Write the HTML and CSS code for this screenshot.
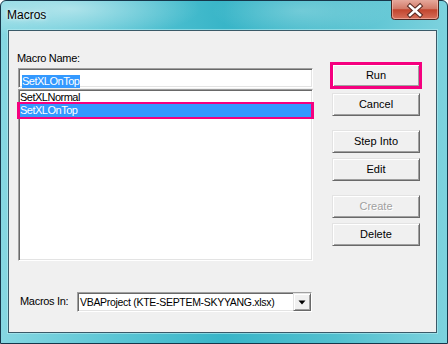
FILE: index.html
```html
<!DOCTYPE html>
<html>
<head>
<meta charset="utf-8">
<link rel="stylesheet" href="styles.css">
</head>
<body>
<div class="window">
  <div class="titlebar">
    <span class="title">Macros</span>
    <div class="close">
      <svg width="48" height="20" viewBox="0 0 48 20">
        <defs>
          <linearGradient id="cg" x1="0" y1="0" x2="0" y2="1">
            <stop offset="0" stop-color="#e6a99c"/>
            <stop offset="0.45" stop-color="#d27a68"/>
            <stop offset="0.5" stop-color="#c2452e"/>
            <stop offset="1" stop-color="#d7715c"/>
          </linearGradient>
        </defs>
        <path d="M0.5 0 V16.5 Q0.5 19.5 3.5 19.5 H44.5 Q47.5 19.5 47.5 16.5 V0" fill="url(#cg)" stroke="#4a2620" stroke-width="1"/>
        <path d="M1.5 1 V16 Q1.5 18.5 4 18.5 H44 Q46.5 18.5 46.5 16 V1" fill="none" stroke="rgba(255,210,200,0.5)" stroke-width="1"/>
        <path d="M19 6 L29 15 M29 6 L19 15" stroke="#5a2a22" stroke-width="4.6" stroke-linecap="square"/>
        <path d="M19 6 L29 15 M29 6 L19 15" stroke="#ffffff" stroke-width="2.6" stroke-linecap="square"/>
      </svg>
    </div>
  </div>
  <div class="client">
    <div class="main">
      <div class="left">
        <div class="label">Macro Name:</div>
        <div class="textbox"><span class="sel">SetXLOnTop</span></div>
        <div class="listbox">
          <div class="item">SetXLNormal</div>
          <div class="item selected">SetXLOnTop</div>
        </div>
      </div>
      <div class="buttons">
        <div class="btn run">Run</div>
        <div class="btn cancel">Cancel</div>
        <div class="btn step">Step Into</div>
        <div class="btn edit">Edit</div>
        <div class="btn create">Create</div>
        <div class="btn delete">Delete</div>
      </div>
    </div>
    <div class="macros-in">
      <div class="label in-label">Macros In:</div>
      <div class="combo">
        <span class="combo-text">VBAProject (KTE-SEPTEM-SKYYANG.xlsx)</span>
        <div class="drop">
          <svg width="8" height="5" viewBox="0 0 8 5"><polygon points="0.5,0.5 7.5,0.5 4,4.5" fill="#000"/></svg>
        </div>
      </div>
    </div>
  </div>
</div>
</body>
</html>
```

FILE: styles.css
```css
* { box-sizing: border-box; }
html, body { margin: 0; padding: 0; background: #ffffff; }
body {
  width: 448px;
  height: 344px;
  overflow: hidden;
  font-family: "Liberation Sans", Arial, sans-serif;
  color: #000;
}
.window {
  width: 448px;
  height: 344px;
  border: 1px solid #16364a;
  border-radius: 6px 6px 0 0;
  display: flex;
  flex-direction: column;
  background:
    radial-gradient(130px 30px at 70px 8px, rgba(255,255,255,0.45), rgba(255,255,255,0)),
    radial-gradient(90px 26px at 300px 10px, rgba(255,255,255,0.22), rgba(255,255,255,0)),
    linear-gradient(90deg, #86d7e2 0%, #5cc6d5 25%, #38b5c8 50%, #52c0cf 75%, #7dd2de 100%);
}
.titlebar {
  height: 29px;
  display: flex;
  justify-content: space-between;
  align-items: flex-start;
}
.title {
  font-size: 12px;
  line-height: 29px;
  padding-left: 6px;
  text-shadow: 0 0 6px rgba(255,255,255,0.9), 0 0 3px rgba(255,255,255,0.7);
}
.close {
  width: 48px;
  height: 20px;
  margin-top: -1px;
  margin-right: 8px;
}
.close svg { display: block; }
.client {
  flex: 1;
  margin: 0 10px 10px 7px;
  border: 1px solid #3a5968;
  background: #f0f0f0;
  padding: 21px 0 0 9px;
  box-shadow: 0 0 0 1px rgba(180,235,240,0.6);
}
.main {
  display: grid;
  grid-template-columns: 295px 88px;
  column-gap: 19px;
}
.left {
  display: flex;
  flex-direction: column;
}
.label {
  font-size: 11px;
  line-height: 13px;
  letter-spacing: -0.3px;
  margin-left: -1px;
  white-space: nowrap;
}
.textbox {
  margin-top: 3px;
  height: 20px;
  background: #fff;
  border: 1px solid;
  border-color: #a0a0a0 #ffffff #ffffff #a0a0a0;
  box-shadow: inset 1px 1px #696969, inset -1px -1px #e3e3e3;
  padding: 2px 0 0 3px;
}
.sel {
  display: inline-block;
  background: #3399ff;
  color: #fff;
  font-size: 11px;
  line-height: 13px;
  letter-spacing: -0.5px;
  padding-right: 1px;
}
.listbox {
  margin-top: 1px;
  height: 172px;
  background: #fff;
  border: 1px solid;
  border-color: #a0a0a0 #ffffff #ffffff #a0a0a0;
  box-shadow: inset 1px 1px #696969, inset -1px -1px #e3e3e3;
  padding: 1px;
}
.item {
  font-size: 11px;
  line-height: 13px;
  letter-spacing: -0.5px;
  white-space: nowrap;
}
.item.selected {
  background: #3399ff;
  color: #fff;
  box-shadow: 0 0 0 2px #f5007f, -1px 0 0 2px #f5007f, 1px 0 0 2px #f5007f;
}
.buttons {
  display: flex;
  flex-direction: column;
  padding-top: 12px;
}
.btn {
  height: 23px;
  font-size: 11px;
  line-height: 21px;
  text-align: center;
  background: #f0f0f0;
  border: 1px solid;
  border-color: #e3e3e3 #696969 #696969 #e3e3e3;
  box-shadow: inset 1px 1px #ffffff, inset -1px -1px #a0a0a0;
}
.run { outline: 3px solid #f5007f; outline-offset: -1px; }
.cancel { margin-top: 6px; }
.step { margin-top: 14px; }
.edit { margin-top: 5px; }
.create { margin-top: 14px; color: #a0a0a0; text-shadow: 1px 1px #ffffff; }
.delete { margin-top: 5px; }
.macros-in {
  display: flex;
  align-items: center;
  margin-top: 31px;
  padding-left: 2px;
}
.in-label {
  width: 57px;
  margin-left: 0;
  margin-top: -2px;
}
.combo {
  width: 235px;
  height: 20px;
  background: #fff;
  border: 1px solid;
  border-color: #a0a0a0 #ffffff #ffffff #a0a0a0;
  box-shadow: inset 1px 1px #696969, inset -1px -1px #e3e3e3;
  display: flex;
  align-items: stretch;
  justify-content: space-between;
  padding-left: 2px;
}
.combo-text {
  font-size: 10.5px;
  line-height: 18px;
  letter-spacing: -0.3px;
  white-space: nowrap;
}
.drop {
  width: 18px;
  background: #f0f0f0;
  border: 1px solid;
  border-color: #e3e3e3 #696969 #696969 #e3e3e3;
  box-shadow: inset 1px 1px #ffffff, inset -1px -1px #a0a0a0;
  display: flex;
  align-items: center;
  justify-content: center;
}
.drop svg { display: block; }
```
